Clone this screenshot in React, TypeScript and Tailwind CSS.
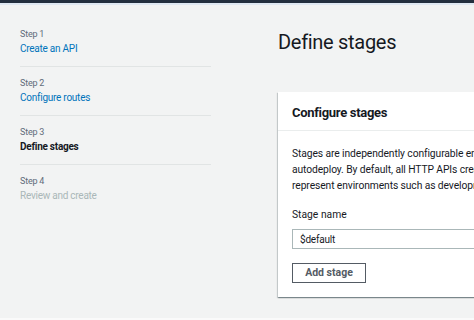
import React from 'react';

const steps = [
  { label: 'Step 1', title: 'Create an API', state: 'link' },
  { label: 'Step 2', title: 'Configure routes', state: 'link' },
  { label: 'Step 3', title: 'Define stages', state: 'current' },
  { label: 'Step 4', title: 'Review and create', state: 'disabled' },
];

const description = [
  'Stages are independently configurable environments that your API can be deployed to. You must deploy to a stage for API configuration changes to take effect, unless that stage is configured to',
  'autodeploy. By default, all HTTP APIs created through the console have a default stage named $default. All changes that you make to your API are deployed automatically to this stage. You can add stages that',
  'represent environments such as development or production.',
];

export default function App() {
  return (
    <div className="flex h-[320px] w-[474px] flex-col overflow-hidden bg-[#f2f3f3] font-['Roboto',sans-serif] text-[#16191f]">
      <div className="h-[3px] bg-[#232f3e]" />
      <div className="h-[2px] bg-[#dfe8f2]" />

      <div className="flex min-h-0 flex-1">
        {/* wizard steps */}
        <nav className="w-[278px] shrink-0 pl-[20px] pt-[13px]">
          <ul className="w-[191px]">
            {steps.map((step, i) => (
              <li key={step.label}>
                <div className="pt-[10px]">
                  <div className="text-[9px] leading-[13px] tracking-[-0.2px] text-[#5f6b7a]">{step.label}</div>
                  <div
                    className={`text-[10px] leading-[15px] tracking-[-0.25px] ${
                      step.state === 'link'
                        ? 'text-[#0073bb]'
                        : step.state === 'current'
                        ? 'font-bold text-[#16191f]'
                        : 'text-[#aab7b8]'
                    }`}
                  >
                    {step.title}
                  </div>
                </div>
                {i < steps.length - 1 && <div className="mt-[10px] h-px bg-[#e1e4e4]" />}
              </li>
            ))}
          </ul>
        </nav>

        {/* main content */}
        <main className="min-w-0 flex-1 pt-[24px]">
          <h1 className="text-[20px] leading-[26px] tracking-[-0.3px] text-[#16191f]">Define stages</h1>

          <section className="mt-[37px] w-[420px] bg-white shadow-[0_1px_1px_0_rgba(0,28,36,0.3),1px_1px_1px_0_rgba(0,28,36,0.15),-1px_1px_1px_0_rgba(0,28,36,0.15)]">
            <div className="flex h-[39px] items-center border-b border-[#eaeded] px-[14px] pt-[3px]">
              <h2 className="text-[13px] font-bold tracking-[-0.3px]">Configure stages</h2>
            </div>
            <div className="px-[14px] pb-[14px] pt-[15px]">
              <div className="text-[10.3px] leading-[16px] tracking-[-0.1px]">
                {description.map((line) => (
                  <p key={line} className="whitespace-nowrap">
                    {line}
                  </p>
                ))}
              </div>

              <label className="mt-[13px] block text-[10.3px] leading-[16px]">Stage name</label>
              <div className="mt-[6px] flex h-[20px] w-[360px] items-center border border-[#aab7b8] pl-[7px] text-[10px] tracking-[-0.2px]">
                $default
              </div>

              <button className="mt-[14px] flex h-[20px] w-[74px] items-center justify-center border border-[#545b64] text-[10.5px] font-bold text-[#545b64]">
                Add stage
              </button>
            </div>
          </section>
        </main>
      </div>

      <div className="h-[2px] bg-[#fafafa]" />
    </div>
  );
}
